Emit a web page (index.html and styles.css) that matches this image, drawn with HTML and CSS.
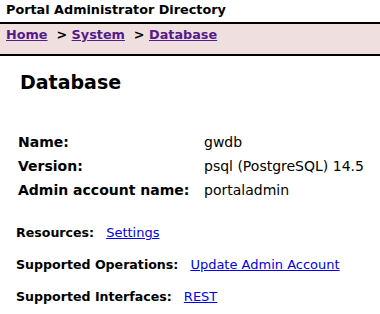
FILE: index.html
```html
<!DOCTYPE html>
<html>
<head>
<meta charset="utf-8">
<link rel="stylesheet" href="styles.css">
</head>
<body>
<div class="top">Portal Administrator Directory</div>
<div class="crumbs">
  <a href="#" class="v">Home</a>&nbsp; &gt; <a href="#" class="v">System</a>&nbsp; &gt; <a href="#" class="v">Database</a>
</div>
<div class="content">
  <h2 class="title">Database</h2>
  <div class="props">
    <div class="row"><span class="k">Name:</span><span class="val">gwdb</span></div>
    <div class="row"><span class="k">Version:</span><span class="val">psql (PostgreSQL) 14.5</span></div>
    <div class="row"><span class="k">Admin account name:</span><span class="val">portaladmin</span></div>
  </div>
  <div class="sects">
    <div class="sect"><b>Resources:</b> &nbsp; <a href="#">Settings</a></div>
    <div class="sect"><b>Supported Operations:</b> &nbsp; <a href="#">Update Admin Account</a></div>
    <div class="sect"><b>Supported Interfaces:</b> &nbsp; <a href="#">REST</a></div>
  </div>
</div>
</body>
</html>
```

FILE: styles.css
```css
html, body { margin: 0; padding: 0; background: #fff; }
body { font-family: "DejaVu Sans", Verdana, sans-serif; font-size: 13px; color: #000; }
.top { font-weight: bold; font-size: 12.8px; padding: 2px 6px 0; height: 20px; }
.crumbs { border-top: 2px solid #000; border-bottom: 2px solid #000; background: #efdfdf; padding: 3px 6px 0; height: 27px; font-weight: bold; font-size: 12.8px; }
a { color: #0000ee; }
a.v { color: #551a8b; }
.content { padding: 0 16px; }
.title { font-size: 19px; margin: 15px 0 0 4px; font-weight: bold; }
.props { margin-top: 41px; font-size: 14px; }
.row { display: flex; height: 24px; padding-left: 2px; }
.k { font-weight: bold; width: 186px; }
.sects { margin-top: 19px; font-size: 12.6px; display: flex; flex-direction: column; gap: 10px; }
.sect { height: 22px; }
.sect a { font-size: 13px; }
```
